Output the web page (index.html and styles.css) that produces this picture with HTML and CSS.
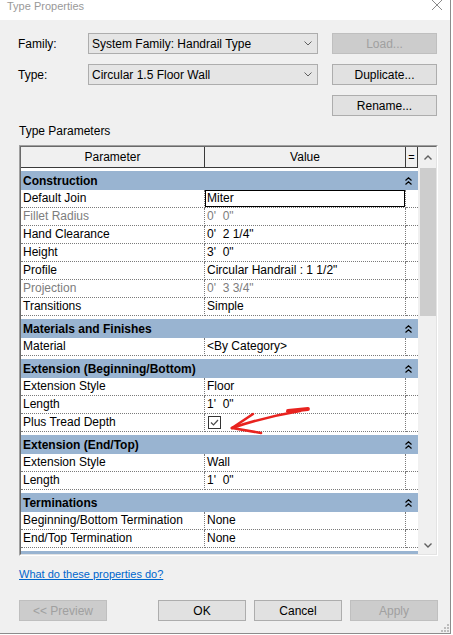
FILE: index.html
```html
<!DOCTYPE html>
<html lang="en">
<head>
<meta charset="utf-8">
<title>Type Properties</title>
<link rel="stylesheet" href="styles.css">
</head>
<body>
<div class="dialog">
  <div class="titlebar">
    <span class="title">Type Properties</span>
    <svg class="close" width="10" height="10" viewBox="0 0 10 10"><path d="M0 0L10 10M10 0L0 10" stroke="#8a8a8a" stroke-width="1" fill="none"/></svg>
  </div>

  <div class="body">
    <div class="form">
      <label class="form-label">Family:</label>
      <div class="combo"><span>System Family: Handrail Type</span><svg width="8" height="5" viewBox="0 0 8 5"><path d="M0.5 0.5L4 4L7.5 0.5" stroke="#606060" fill="none"/></svg></div>
      <button class="btn" disabled>Load...</button>

      <label class="form-label">Type:</label>
      <div class="combo"><span>Circular 1.5 Floor Wall</span><svg width="8" height="5" viewBox="0 0 8 5"><path d="M0.5 0.5L4 4L7.5 0.5" stroke="#606060" fill="none"/></svg></div>
      <button class="btn">Duplicate...</button>

      <button class="btn rename">Rename...</button>
    </div>

    <div class="section-label">Type Parameters</div>

    <div class="frame">
      <div class="frame-inner">
        <div class="grid">
          <div class="head">
            <div class="hcell">Parameter</div>
            <div class="hcell">Value</div>
            <div class="hcell eq">=</div>
          </div>

          <div class="group"><span>Construction</span><svg class="collapse" width="7" height="8" viewBox="0 0 7 8"><path d="M0.5 3.5L3.5 0.8L6.5 3.5M0.5 7.5L3.5 4.8L6.5 7.5" stroke="#000" stroke-width="1.2" fill="none"/></svg></div>
          <div class="row"><div class="cell">Default Join</div><div class="cell val edit">Miter</div><div class="cell"></div></div>
          <div class="row off"><div class="cell">Fillet Radius</div><div class="cell val">0'  0"</div><div class="cell"></div></div>
          <div class="row"><div class="cell">Hand Clearance</div><div class="cell val">0'  2 1/4"</div><div class="cell"></div></div>
          <div class="row"><div class="cell">Height</div><div class="cell val">3'  0"</div><div class="cell"></div></div>
          <div class="row"><div class="cell">Profile</div><div class="cell val">Circular Handrail : 1 1/2"</div><div class="cell"></div></div>
          <div class="row off"><div class="cell">Projection</div><div class="cell val">0'  3 3/4"</div><div class="cell"></div></div>
          <div class="row"><div class="cell">Transitions</div><div class="cell val">Simple</div><div class="cell"></div></div>

          <div class="group"><span>Materials and Finishes</span><svg class="collapse" width="7" height="8" viewBox="0 0 7 8"><path d="M0.5 3.5L3.5 0.8L6.5 3.5M0.5 7.5L3.5 4.8L6.5 7.5" stroke="#000" stroke-width="1.2" fill="none"/></svg></div>
          <div class="row"><div class="cell">Material</div><div class="cell val">&lt;By Category&gt;</div><div class="cell"></div></div>

          <div class="group"><span>Extension (Beginning/Bottom)</span><svg class="collapse" width="7" height="8" viewBox="0 0 7 8"><path d="M0.5 3.5L3.5 0.8L6.5 3.5M0.5 7.5L3.5 4.8L6.5 7.5" stroke="#000" stroke-width="1.2" fill="none"/></svg></div>
          <div class="row"><div class="cell">Extension Style</div><div class="cell val">Floor</div><div class="cell"></div></div>
          <div class="row"><div class="cell">Length</div><div class="cell val">1'  0"</div><div class="cell"></div></div>
          <div class="row"><div class="cell">Plus Tread Depth</div><div class="cell val"><span class="check"><svg width="11" height="11" viewBox="0 0 11 11"><path d="M2 5.5L4.5 8L9 3" stroke="#4a4a4a" stroke-width="1.2" fill="none"/></svg></span></div><div class="cell"></div></div>

          <div class="group"><span>Extension (End/Top)</span><svg class="collapse" width="7" height="8" viewBox="0 0 7 8"><path d="M0.5 3.5L3.5 0.8L6.5 3.5M0.5 7.5L3.5 4.8L6.5 7.5" stroke="#000" stroke-width="1.2" fill="none"/></svg></div>
          <div class="row"><div class="cell">Extension Style</div><div class="cell val">Wall</div><div class="cell"></div></div>
          <div class="row"><div class="cell">Length</div><div class="cell val">1'  0"</div><div class="cell"></div></div>

          <div class="group"><span>Terminations</span><svg class="collapse" width="7" height="8" viewBox="0 0 7 8"><path d="M0.5 3.5L3.5 0.8L6.5 3.5M0.5 7.5L3.5 4.8L6.5 7.5" stroke="#000" stroke-width="1.2" fill="none"/></svg></div>
          <div class="row"><div class="cell">Beginning/Bottom Termination</div><div class="cell val">None</div><div class="cell"></div></div>
          <div class="row"><div class="cell">End/Top Termination</div><div class="cell val">None</div><div class="cell"></div></div>

          <!-- next category, scrolled below the visible area -->
          <div class="group"></div>
        </div>

        <div class="scrollbar">
          <div class="sb-btn sb-up"><svg width="8" height="5" viewBox="0 0 8 5"><path d="M0.5 4.5L4 1L7.5 4.5" stroke="#606060" stroke-width="1.4" fill="none"/></svg></div>
          <div class="sb-thumb"></div>
          <div class="sb-track"></div>
          <div class="sb-btn sb-down"><svg width="8" height="5" viewBox="0 0 8 5"><path d="M0.5 0.5L4 4L7.5 0.5" stroke="#606060" stroke-width="1.4" fill="none"/></svg></div>
        </div>
      </div>
    </div>

    <a class="help" href="#">What do these properties do?</a>

    <div class="actions">
      <button class="btn wide" disabled>&lt;&lt; Preview</button>
      <div class="actions-right">
        <button class="btn wide">OK</button>
        <button class="btn wide">Cancel</button>
        <button class="btn wide" disabled>Apply</button>
      </div>
    </div>
  </div>

  <svg class="grip" width="8" height="8" viewBox="0 0 8 8">
    <rect x="6" y="0" width="2" height="2"/>
    <rect x="3" y="3" width="2" height="2"/><rect x="6" y="3" width="2" height="2"/>
    <rect x="0" y="6" width="2" height="2"/><rect x="3" y="6" width="2" height="2"/><rect x="6" y="6" width="2" height="2"/>
  </svg>

  <svg class="markup" width="453" height="635" viewBox="0 0 453 635">
    <path d="M232 428C250 422 270 416 300 411" stroke="#e8231f" stroke-width="2.6" fill="none" stroke-linecap="round"/>
    <path d="M288 411L308 409" stroke="#e8231f" stroke-width="3.8" fill="none" stroke-linecap="round"/>
    <path d="M232 428L253 414" stroke="#e8231f" stroke-width="2.6" fill="none" stroke-linecap="round"/>
    <path d="M232 428L261 433" stroke="#e8231f" stroke-width="2.6" fill="none" stroke-linecap="round"/>
  </svg>
</div>
</body>
</html>
```

FILE: styles.css
```css
* {
  box-sizing: border-box;
}

html,
body {
  margin: 0;
  padding: 0;
}

body {
  width: 453px;
  height: 635px;
  overflow: hidden;
  background: #fff;
  font-family: "Liberation Sans", Arial, sans-serif;
  font-size: 12px;
  color: #000;
}

.dialog {
  position: relative;
  width: 451px;
  height: 634px;
  background: #f0f0f0;
  border-right: 1px solid #8c8c8c;
  border-bottom: 1px solid #8c8c8c;
  display: flex;
  flex-direction: column;
}

/* window caption */
.titlebar {
  height: 20px;
  flex: none;
  background: #fff;
  display: flex;
  justify-content: space-between;
  align-items: flex-start;
  padding: 0 8px 0 7px;
}

.title {
  font-size: 11px;
  line-height: 12px;
  color: #999;
}

.close {
  display: block;
}

.body {
  flex: 1;
  padding: 13px 12px 0 19px;
  display: flex;
  flex-direction: column;
}

/* family / type pickers */
.form {
  display: grid;
  grid-template-columns: 55px 230px 105px;
  grid-auto-rows: 21px;
  column-gap: 14px;
  row-gap: 10px;
  align-items: center;
}

.form-label {
  margin-left: -1px;
}

.combo {
  height: 21px;
  border: 1px solid #adadad;
  background: #e5e5e5;
  display: flex;
  align-items: center;
  justify-content: space-between;
  padding: 0 5px 0 3px;
  white-space: nowrap;
}

.combo svg {
  display: block;
}

.btn {
  height: 21px;
  margin: 0;
  padding: 0;
  border: 1px solid #adadad;
  background: #e1e1e1;
  font: inherit;
  color: #000;
}

.btn:disabled {
  background: #cccccc;
  border-color: #bfbfbf;
  color: #a0a0a0;
}

.rename {
  grid-column: 3;
}

.section-label {
  margin-top: 8px;
  line-height: 15px;
}

/* property grid */
.frame {
  margin-top: 6px;
  height: 411px;
  flex: none;
  border: 1px solid;
  border-color: #a0a0a0 #fff #fff #a0a0a0;
}

.frame-inner {
  height: 100%;
  border: 1px solid;
  border-color: #696969 #e3e3e3 #e3e3e3 #696969;
  background: #fff;
  display: flex;
}

.grid {
  width: 397px;
  flex: none;
  overflow: hidden;
}

.head,
.row {
  display: grid;
  grid-template-columns: 184px 201px 12px;
}

.head {
  height: 21px;
  background: #f0f0f0;
}

.hcell {
  border-right: 1px solid #3a3a3a;
  border-bottom: 1px solid #3a3a3a;
  text-align: center;
  line-height: 20px;
}

.hcell.eq {
  font-size: 11px;
}

.group {
  margin-top: 3px;
  height: 19px;
  background: #99b4d1;
  font-weight: bold;
  display: flex;
  align-items: center;
  justify-content: space-between;
  padding: 0 6px 0 2px;
  white-space: nowrap;
}

.collapse {
  display: block;
}

.row {
  height: 18px;
}

.cell {
  border-bottom: 1px dotted #7a7a7a;
  line-height: 17px;
  padding-left: 2px;
  white-space: pre;
  overflow: hidden;
}

.cell:nth-child(1),
.cell:nth-child(2) {
  border-right: 1px dotted #7a7a7a;
}

.cell:nth-child(3) {
  padding-left: 0;
}

.val {
  padding-left: 2px;
}

.val.edit {
  box-shadow: inset 0 0 0 1px #000;
}

.off .cell {
  color: #7d7d7d;
}

.check {
  display: inline-flex;
  align-items: center;
  justify-content: center;
  width: 13px;
  height: 13px;
  margin: 2px 0 0 1px;
  border: 1px solid #333;
  background: #fff;
  vertical-align: top;
}

.check svg {
  display: block;
}

.scrollbar {
  flex: 1;
  background: #f0f0f0;
  display: flex;
  flex-direction: column;
}

.sb-btn {
  display: flex;
  align-items: center;
  justify-content: center;
  padding-left: 1px;
}

.sb-btn svg {
  display: block;
}

.sb-up {
  height: 21px;
}

.sb-down {
  height: 17px;
}

.sb-thumb {
  height: 148px;
  margin: 0 0 0 2px;
  background: #cdcdcd;
}

.sb-track {
  flex: 1;
}

.help {
  margin-top: 11px;
  line-height: 15px;
  font-size: 11px;
  color: #0066cc;
  text-decoration: underline;
  align-self: flex-start;
}

/* dialog buttons */
.actions {
  margin-top: 18px;
  display: flex;
  justify-content: space-between;
}

.actions-right {
  display: flex;
  gap: 8px;
}

.wide {
  width: 88px;
}

.grip {
  position: absolute;
  right: 1px;
  bottom: 1px;
  fill: #bdbdbd;
}

.markup {
  position: absolute;
  left: 0;
  top: 0;
  pointer-events: none;
}
```
